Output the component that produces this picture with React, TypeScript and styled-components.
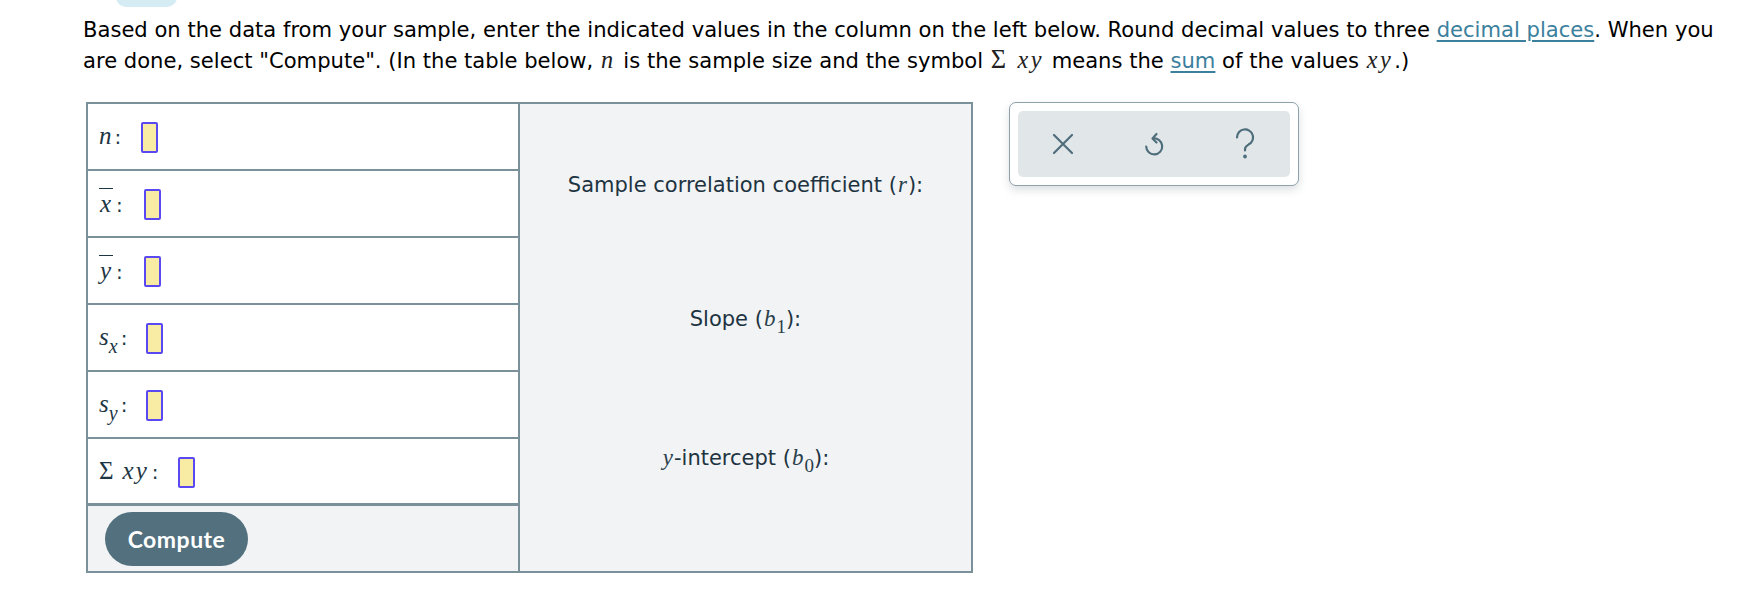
import styled, { createGlobalStyle } from "styled-components";

const GlobalStyle = createGlobalStyle`
  html, body {
    margin: 0;
    padding: 0;
    background: #ffffff;
  }
  body {
    font-family: "DejaVu Sans", Verdana, sans-serif;
  }
`;

const Page = styled.div`
  position: relative;
  width: 1741px;
  height: 596px;
  padding: 15px 0 0 83px;
  box-sizing: border-box;
  overflow: hidden;
`;

// light blue tab peeking in from the top edge
const TopTab = styled.div`
  position: absolute;
  top: -20px;
  left: 116px;
  width: 61px;
  height: 27px;
  border-radius: 10px;
  background: #d5ecf4;
`;

const Instructions = styled.p`
  margin: 0;
  width: 1650px;
  font-size: 21.1px;
  line-height: 30px;
  color: #000000;
`;

const Link = styled.a`
  color: #3b809d;
  text-decoration: underline;
  text-decoration-thickness: 2px;
  text-underline-offset: 3px;
  cursor: pointer;
`;

const MathSpan = styled.span<{ $italic?: boolean; $big?: boolean }>`
  font-family: "Liberation Serif", "Times New Roman", serif;
  font-style: ${(p) => (p.$italic ? "italic" : "normal")};
  font-size: ${(p) => (p.$big ? "1.25em" : "1.15em")};
  letter-spacing: 2.5px;
  padding: 0 1px;
  color: #222;
`;

const Workspace = styled.div`
  display: flex;
  align-items: flex-start;
  gap: 36px;
  margin-top: 26px;
  margin-left: 3px;
`;

const Table = styled.div`
  display: grid;
  grid-template-columns: 432px 451px;
  border: 2px solid #7b9199;
`;

const LeftColumn = styled.div`
  display: flex;
  flex-direction: column;
  border-right: 2px solid #7b9199;
`;

const InputRow = styled.div<{ $last?: boolean }>`
  height: 67px;
  box-sizing: border-box;
  display: flex;
  align-items: center;
  padding-left: 11px;
  background: #ffffff;
  border-bottom: ${(p) => (p.$last ? "3px" : "2px")} solid #7b9199;
`;

const Label = styled.span<{ $gap: number }>`
  display: inline-block;
  font-family: "Liberation Serif", "Times New Roman", serif;
  font-style: italic;
  font-size: 25px;
  line-height: 30px;
  color: #1e3644;
  margin-right: ${(p) => p.$gap}px;
  white-space: nowrap;
`;

const Colon = styled.span`
  font-family: "DejaVu Sans", Verdana, sans-serif;
  font-style: normal;
  font-size: 20px;
  margin-left: 3px;
`;

const Bar = styled.span`
  display: inline-block;
  border-top: 1.5px solid #1e3644;
  padding: 4px 2px 0 1px;
  line-height: 22px;
`;

const Sub = styled.sub`
  font-size: 0.8em;
  vertical-align: -8px;
  line-height: 0;
`;

const Sigma = styled.span`
  font-style: normal;
  margin-right: 9px;
`;

const Letters = styled.span`
  letter-spacing: 2px;
`;

const AnswerBox = styled.span`
  display: inline-block;
  width: 17px;
  height: 31px;
  box-sizing: border-box;
  border: 2px solid #5a48f2;
  border-radius: 2px;
  background: #f8eba3;
  margin-top: 2px;
`;

const ComputeRow = styled.div`
  height: 65px;
  display: flex;
  align-items: center;
  padding-left: 17px;
  background: #f1f3f5;
`;

const ComputeButton = styled.button`
  width: 143px;
  height: 54px;
  border: none;
  border-radius: 27px;
  background: #52707e;
  color: #ffffff;
  font-family: Lato, "Open Sans", sans-serif;
  font-weight: 700;
  font-size: 23px;
  letter-spacing: 0.5px;
  cursor: pointer;
`;

const ResultColumn = styled.div`
  display: flex;
  flex-direction: column;
  background: #f1f3f5;
  padding-bottom: 27px;
`;

const ResultCell = styled.div<{ $h: number }>`
  height: ${(p) => p.$h}px;
  display: flex;
  align-items: center;
  justify-content: center;
  font-size: 21px;
  color: #1e3341;
`;

const ResultMath = styled.span`
  font-family: "Liberation Serif", "Times New Roman", serif;
  font-style: italic;
  font-size: 23px;
  color: #2a3f4c;
  padding: 0 1px;
`;

const ResultSub = styled.sub`
  font-family: "Liberation Serif", "Times New Roman", serif;
  font-style: normal;
  font-size: 19px;
  vertical-align: -7px;
  line-height: 0;
  color: #2a3f4c;
`;

const ToolFrame = styled.div`
  padding: 8px;
  background: #ffffff;
  border: 1px solid #8ca1a9;
  border-radius: 7px;
  box-shadow: 0 4px 8px rgba(60, 80, 90, 0.18);
`;

const ToolBar = styled.div`
  width: 272px;
  height: 66px;
  display: grid;
  grid-template-columns: repeat(3, 1fr);
  align-items: center;
  justify-items: center;
  background: #e1e6e9;
  border-radius: 5px;
`;

const ToolButton = styled.button`
  border: none;
  background: transparent;
  padding: 0;
  display: flex;
  align-items: center;
  justify-content: center;
  color: #4f6e7c;
  cursor: pointer;
`;

function CloseIcon() {
  return (
    <svg width="22" height="22" viewBox="0 0 22 22" fill="none" stroke="currentColor" strokeWidth="2.2" strokeLinecap="round">
      <path d="M2 2 L20 20 M20 2 L2 20" />
    </svg>
  );
}

function UndoIcon() {
  return (
    <svg width="20" height="26" viewBox="0 0 20 26" fill="none" stroke="currentColor" strokeWidth="2.2" strokeLinecap="round" strokeLinejoin="round">
      <path d="M9 7.5 A8 8 0 1 1 2.2 15.5" />
      <path d="M12.5 3 L8.5 7.5 L12.5 11.5" />
    </svg>
  );
}

function HelpIcon() {
  return (
    <svg width="22" height="32" viewBox="0 0 22 32" fill="none" stroke="currentColor" strokeWidth="2.2" strokeLinecap="round">
      <path d="M3 9.5 A8 8 0 1 1 14.5 16.6 C12.4 17.7 11 19 11 21.2 V22.5" />
      <circle cx="11" cy="28.5" r="0.8" fill="currentColor" />
    </svg>
  );
}

export default function App() {
  return (
    <>
      <GlobalStyle />
      <Page>
        <TopTab />
        <Instructions>
          Based on the data from your sample, enter the indicated values in the column on the left below. Round
          decimal values to three <Link>decimal places</Link>. When you are done, select "Compute". (In the table
          below, <MathSpan $italic>n</MathSpan> is the sample size and the symbol <MathSpan $big>Σ</MathSpan>{" "}
          <MathSpan $italic>xy</MathSpan> means the <Link>sum</Link> of the values <MathSpan $italic>xy</MathSpan>.)
        </Instructions>

        <Workspace>
          <Table>
            <LeftColumn>
              <InputRow>
                <Label $gap={20}>
                  n<Colon>:</Colon>
                </Label>
                <AnswerBox />
              </InputRow>
              <InputRow>
                <Label $gap={21}>
                  <Bar>x</Bar>
                  <Colon>:</Colon>
                </Label>
                <AnswerBox />
              </InputRow>
              <InputRow>
                <Label $gap={21}>
                  <Bar>y</Bar>
                  <Colon>:</Colon>
                </Label>
                <AnswerBox />
              </InputRow>
              <InputRow>
                <Label $gap={19}>
                  s<Sub>x</Sub>
                  <Colon>:</Colon>
                </Label>
                <AnswerBox />
              </InputRow>
              <InputRow>
                <Label $gap={19}>
                  s<Sub>y</Sub>
                  <Colon>:</Colon>
                </Label>
                <AnswerBox />
              </InputRow>
              <InputRow $last>
                <Label $gap={19}>
                  <Sigma>Σ</Sigma>
                  <Letters>xy</Letters>
                  <Colon>:</Colon>
                </Label>
                <AnswerBox />
              </InputRow>
              <ComputeRow>
                <ComputeButton>Compute</ComputeButton>
              </ComputeRow>
            </LeftColumn>

            <ResultColumn>
              <ResultCell $h={162}>
                <span>
                  Sample correlation coefficient (<ResultMath>r</ResultMath>):
                </span>
              </ResultCell>
              <ResultCell $h={106}>
                <span>
                  Slope (<ResultMath>b</ResultMath>
                  <ResultSub>1</ResultSub>):
                </span>
              </ResultCell>
              <ResultCell $h={172}>
                <span>
                  <ResultMath>y</ResultMath>-intercept (<ResultMath>b</ResultMath>
                  <ResultSub>0</ResultSub>):
                </span>
              </ResultCell>
            </ResultColumn>
          </Table>

          <ToolFrame>
            <ToolBar>
              <ToolButton aria-label="Close">
                <CloseIcon />
              </ToolButton>
              <ToolButton aria-label="Reset">
                <UndoIcon />
              </ToolButton>
              <ToolButton aria-label="Help">
                <HelpIcon />
              </ToolButton>
            </ToolBar>
          </ToolFrame>
        </Workspace>
      </Page>
    </>
  );
}
